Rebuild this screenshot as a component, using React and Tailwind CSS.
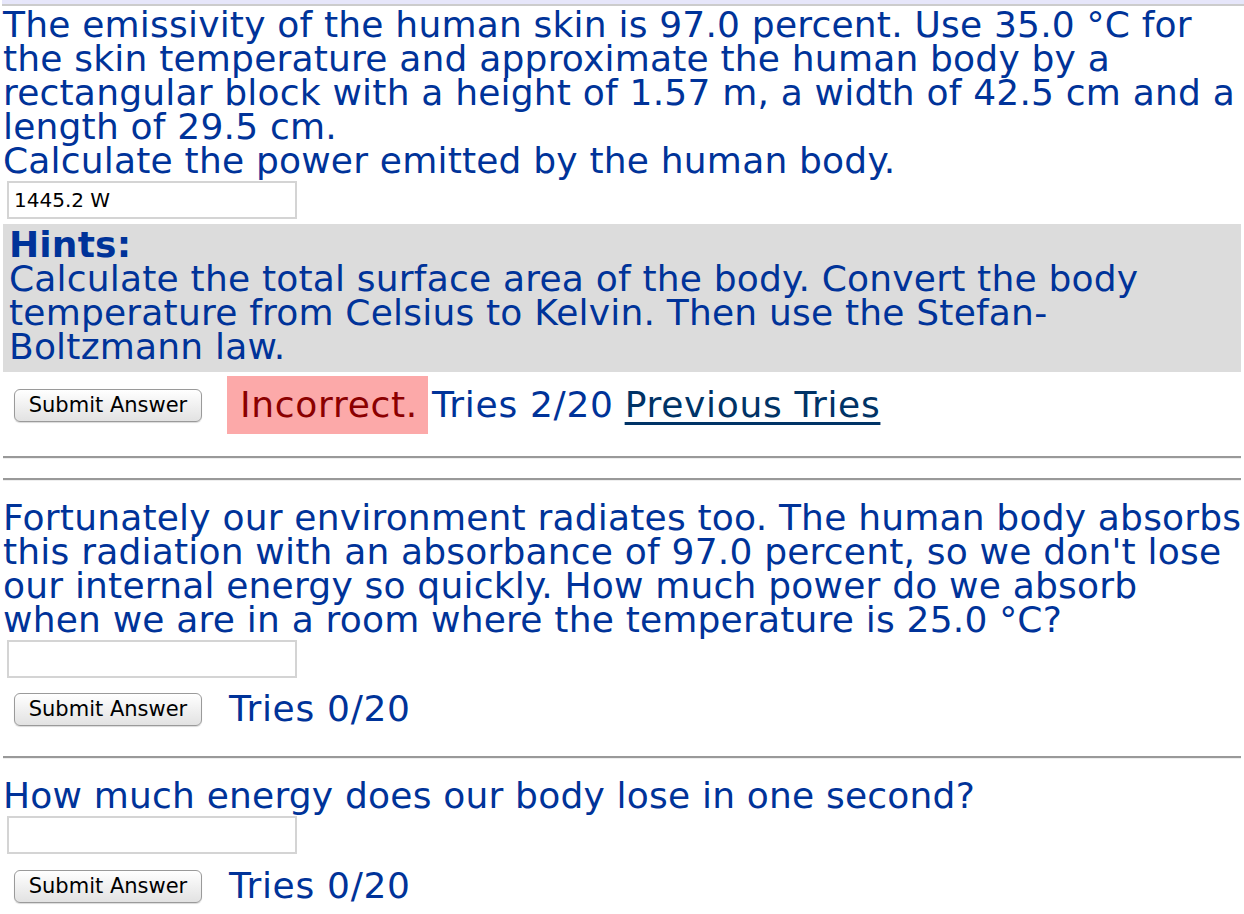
const font = { fontFamily: '"DejaVu Sans", Verdana, sans-serif' };

export default function App() {
  return (
    <div className="min-h-screen overflow-hidden bg-white text-[#003399]" style={font}>
      <div className="ml-[2px] h-[6px] bg-[#e6e6fa] border-b-2 border-[#cccccc]" />
      <div className="px-[3px] pt-[2px]">
        <Question
          lines={[
            'The emissivity of the human skin is 97.0 percent. Use 35.0 °C for',
            'the skin temperature and approximate the human body by a',
            'rectangular block with a height of 1.57 m, a width of 42.5 cm and a',
            'length of 29.5 cm.',
            'Calculate the power emitted by the human body.',
          ]}
          value="1445.2 W"
        />
        <div className="mt-[5px] bg-[#dcdcdc] px-[6px] pt-[4px] pb-[8px] text-[36px] leading-[34px] tracking-[0.2px] whitespace-nowrap">
          <div className="font-bold">Hints:</div>
          <div>Calculate the total surface area of the body. Convert the body</div>
          <div>temperature from Celsius to Kelvin. Then use the Stefan-</div>
          <div>Boltzmann law.</div>
        </div>
        <div className="flex items-center h-[58px] mt-[4px] whitespace-nowrap tracking-[0.7px]">
          <SubmitButton />
          <span className="ml-[25px] bg-[#fca9a9] text-[#8b0000] text-[36px] leading-[58px] pl-[13px] pr-[10px]">Incorrect.</span>
          <span className="ml-[4px] text-[36px]">Tries 2/20</span>
          <a href="#" className="ml-[11px] text-[36px] text-[#003366] underline underline-offset-[5px]">Previous Tries</a>
        </div>
        <Rule className="mt-[22px]" />
        <Rule className="mt-[19px]" />
        <div className="mt-[20px]">
          <Question
            lines={[
              'Fortunately our environment radiates too. The human body absorbs',
              "this radiation with an absorbance of 97.0 percent, so we don't lose",
              'our internal energy so quickly. How much power do we absorb',
              'when we are in a room where the temperature is 25.0 °C?',
            ]}
            value=""
          />
        </div>
        <TriesRow className="mt-[7px]" />
        <Rule className="mt-[23px]" />
        <div className="mt-[20px]">
          <Question lines={['How much energy does our body lose in one second?']} value="" />
        </div>
        <TriesRow className="mt-[8px]" />
      </div>
    </div>
  );
}

function Question({ lines, value }) {
  return (
    <div>
      <div className="text-[36px] leading-[34px] tracking-[0.2px] whitespace-nowrap">
        {lines.map((l, i) => (
          <div key={i}>{l}</div>
        ))}
      </div>
      <input
        readOnly
        value={value}
        className="mt-[3px] ml-[4px] block w-[290px] h-[38px] border-2 border-[#d4d4d4] bg-white px-[5px] text-[20px] text-black outline-none"
        style={font}
      />
    </div>
  );
}

function TriesRow({ className }) {
  return (
    <div className={`flex items-center h-[48px] whitespace-nowrap ${className}`}>
      <SubmitButton />
      <span className="ml-[27px] text-[36px] tracking-[0.7px]">Tries 0/20</span>
    </div>
  );
}

function SubmitButton() {
  return (
    <button
      className="ml-[11px] w-[188px] h-[33px] shrink-0 rounded-[6px] border border-[#9a9a9a] bg-gradient-to-b from-white to-[#e2e2e2] text-[21px] leading-none tracking-normal text-black shadow-[0_1px_1px_rgba(0,0,0,0.15)]"
      style={font}
    >
      Submit Answer
    </button>
  );
}

function Rule({ className }) {
  return <div className={`h-[2px] bg-[#999999] border-b border-[#eeeeee] box-content ${className}`} />;
}
